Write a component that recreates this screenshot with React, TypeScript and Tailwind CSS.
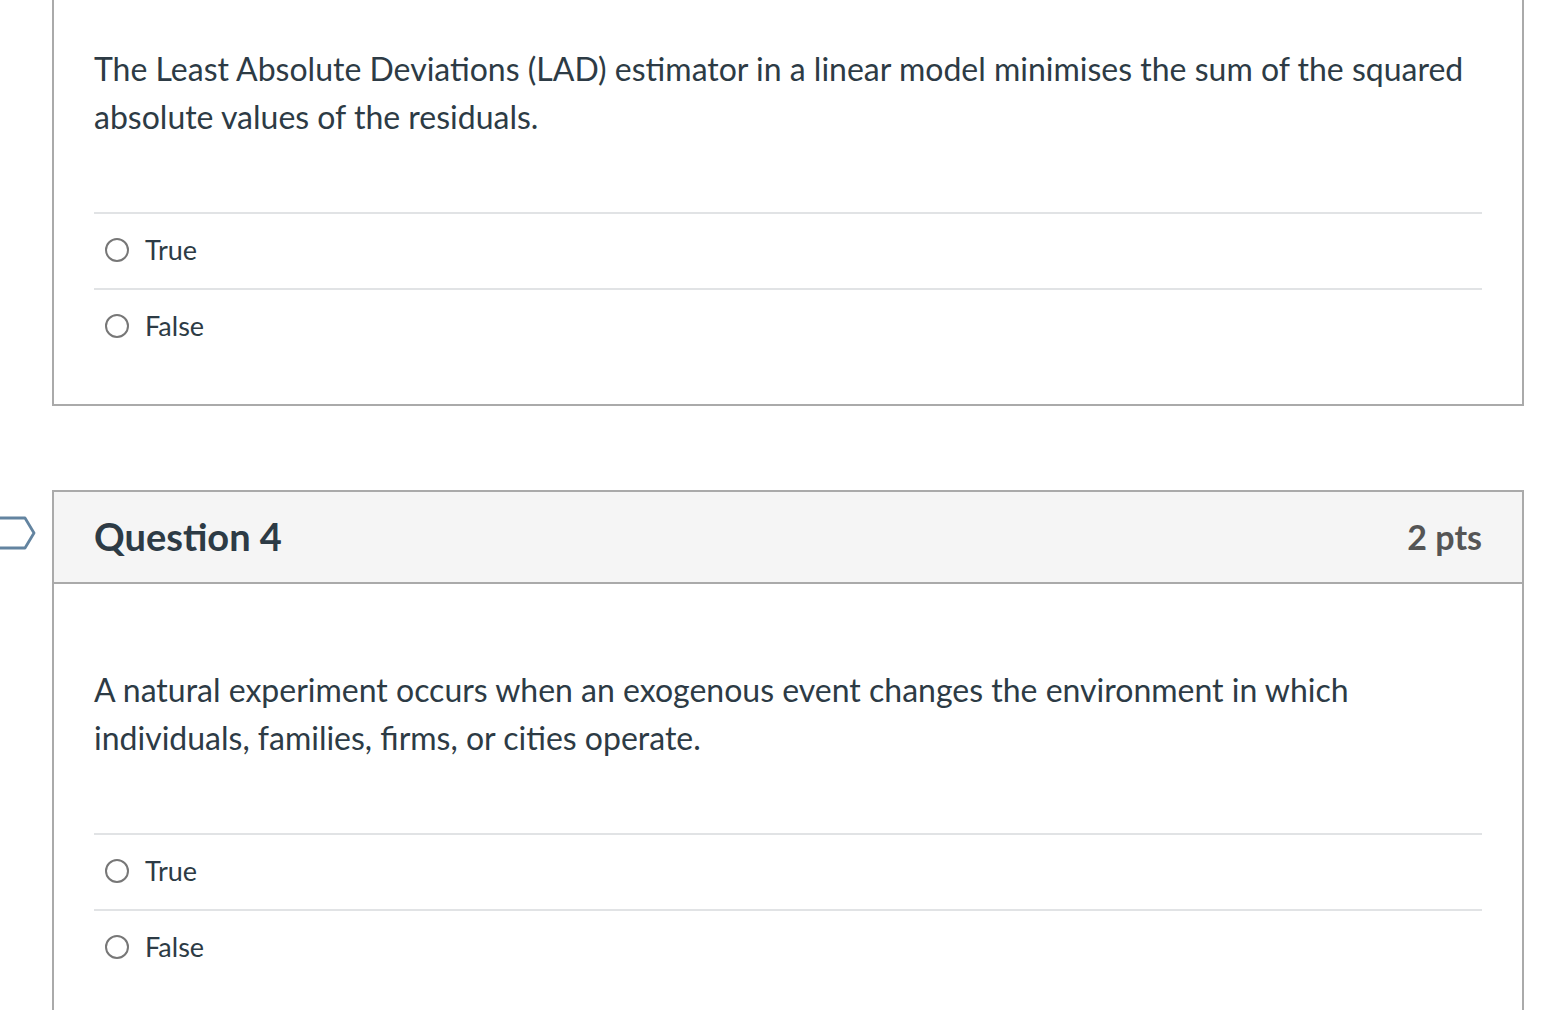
import React from "react";

function Radio({ label }: { label: string }) {
  return (
    <div className="flex items-center h-[76px] pb-[2px] border-t-2 border-[#e1e3e5]">
      <span className="ml-[11px] w-[24px] h-[24px] rounded-full border-2 border-[#777777] bg-white" />
      <span className="ml-[16px] text-[27px] text-[#2d3b45]">{label}</span>
    </div>
  );
}

export default function App() {
  return (
    <div
      className="relative w-[1568px] h-[1010px] overflow-hidden bg-white"
      style={{ fontFamily: "Lato, 'Noto Sans', sans-serif" }}
    >
      <svg
        className="absolute left-0 top-[515px]"
        width="38"
        height="36"
        viewBox="0 0 38 36"
      >
        <path
          d="M-10 3 H25 L34 18 L25 33 H-10"
          fill="none"
          stroke="#6384a0"
          strokeWidth="2.8"
          strokeLinejoin="round"
        />
      </svg>

      <div className="ml-[52px] w-[1472px] flex flex-col">
        <div className="border-x-2 border-b-2 border-[#aaaaaa] px-10 pt-[45px] pb-[40px]">
          <p className="text-[32px] leading-[48px] text-[#2d3b45]">
            The Least Absolute Deviations (LAD) estimator in a linear model minimises the sum of the squared absolute values of the residuals.
          </p>
          <div className="mt-[71px] flex flex-col">
            <Radio label="True" />
            <Radio label="False" />
          </div>
        </div>

        <div className="mt-[84px] border-2 border-b-0 border-[#aaaaaa]">
          <div className="h-[92px] pb-[2px] bg-[#f5f5f5] border-b-2 border-[#aaaaaa] px-10 flex items-center justify-between">
            <h2 className="text-[38px] font-bold text-[#2d3b45]">Question 4</h2>
            <span className="text-[34px] font-bold text-[#555555]">2 pts</span>
          </div>
          <div className="px-10 pt-[82px] pb-[40px]">
            <p className="text-[32px] leading-[48px] text-[#2d3b45]">
              A natural experiment occurs when an exogenous event changes the environment in which individuals, families, firms, or cities operate.
            </p>
            <div className="mt-[71px] flex flex-col">
              <Radio label="True" />
              <Radio label="False" />
            </div>
          </div>
        </div>
      </div>
    </div>
  );
}
